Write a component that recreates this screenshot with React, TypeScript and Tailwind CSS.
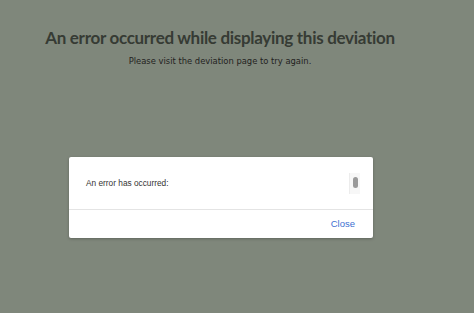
import React from 'react'

const App = () => {
  return (
    <div className="w-[474px] h-[313px] bg-[#7f877b] overflow-hidden">
      <div className="w-[440px] pt-[27px] flex flex-col items-center text-center">
        <h1 className="whitespace-nowrap text-[17px] leading-[22px] font-bold tracking-[-0.3px] text-[#363b34] font-['Lato',sans-serif]">
          An error occurred while displaying this deviation
        </h1>
        <p className="mt-[6px] whitespace-nowrap text-[8.4px] leading-[12px] text-[#1f221e] font-['DejaVu_Sans',sans-serif]">
          Please visit the deviation page to try again.
        </p>
      </div>
      <div className="ml-[69px] mt-[90px] w-[304px] bg-white rounded-[2px] shadow-[0_1px_3px_rgba(0,0,0,0.25)] font-['Liberation_Sans',Arial,sans-serif]">
        <div className="h-[53px] flex justify-between pl-[17px] pr-[13px] pt-[20px] border-b border-[#e4e4e4]">
          <span className="text-[8.3px] leading-[12px] text-[#333]">An error has occurred:</span>
          <div className="w-[11px] h-[21px] -mt-[4px] bg-[#f7f7f7] border-l border-[#ececec] flex justify-center pt-[4px]">
            <div className="w-[5px] h-[11px] rounded-[3px] bg-[#9a9a9a]" />
          </div>
        </div>
        <div className="h-[28px] flex items-center justify-end pr-[18px]">
          <span className="text-[9.5px] text-[#3d6fd1]">Close</span>
        </div>
      </div>
    </div>
  )
}

export default App
